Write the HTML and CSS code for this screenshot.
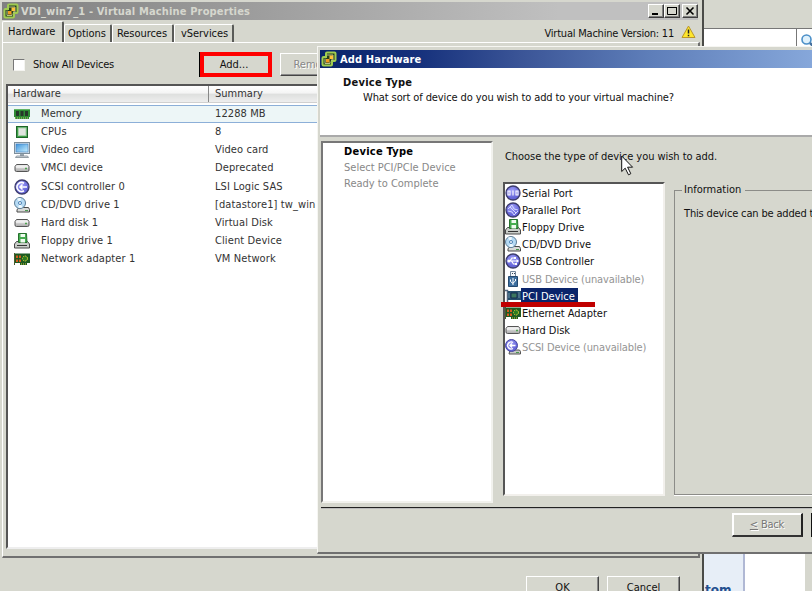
FILE: index.html
```html
<!DOCTYPE html>
<html lang="en">
<head>
    <meta charset="UTF-8">
    <title>VDI_win7_1 - Virtual Machine Properties</title>
    <link rel="stylesheet" href="styles.css">
</head>
<body>
    <!-- Shared icons -->
    <svg class="defs">
        <defs>
            <radialGradient id="ball" cx="45%" cy="35%">
                <stop offset="0" stop-color="#a4a4fa"/>
                <stop offset="1" stop-color="#6464d8"/>
            </radialGradient>
            <linearGradient id="metal" x1="0" y1="0" x2="0" y2="1">
                <stop offset="0" stop-color="#f4f4f4"/>
                <stop offset="1" stop-color="#aaa"/>
            </linearGradient>
            <linearGradient id="screen" x1="0" y1="0" x2="1" y2="1">
                <stop offset="0" stop-color="#3f94dc"/>
                <stop offset="1" stop-color="#c8f0ff"/>
            </linearGradient>
            <symbol id="vm" viewBox="0 0 16 16">
                <path d="M6 1.5h7.5q1 0 1 1V9q0 1-1 1H11v3.500q0 1-1 1H2.500q-1 0-1-1V7q0-1 1-1H5V2.500q0-1 1-1z" fill="#25401a" stroke="#a0cc50" stroke-width="2"/>
                <path d="M6 4h6v5h-2M4 7.500v5h5v-2" fill="none" stroke="#b9bf8c"/>
                <path d="M8.500 4.500h3.500V8H8.500z" fill="#ffc23a"/>
                <path d="M5 8h3.500v3.500H5z" fill="#f09a20"/>
            </symbol>
            <symbol id="memory" viewBox="0 0 16 16">
                <path d="M0 3h16v8h-1v2H1v-2H0z" fill="#2e8b35"/>
                <path d="M0 3h16v1H0z" fill="#62b464"/>
                <path d="M2 5h3v5H2zM6.500 5h3v5h-3zM11 5h3v5h-3z" fill="#26382a"/>
                <path d="M1 12h14" stroke="#c4c36a" stroke-dasharray="1 1"/>
            </symbol>
            <symbol id="cpu" viewBox="0 0 16 16">
                <rect x="2.500" y="2.500" width="11" height="11" fill="#3da047" stroke="#1d6529"/>
                <rect x="4.500" y="4" width="7.500" height="7.500" fill="#e0e5e0" stroke="#a9cfab"/>
            </symbol>
            <symbol id="video" viewBox="0 0 16 16">
                <rect x=".5" y=".5" width="15" height="11" fill="#dce6ec" stroke="#7d8e9b"/>
                <rect x="2" y="2" width="12" height="8" fill="url(#screen)" stroke="#3c7cc0" stroke-width=".6"/>
                <path d="M6 12h4v2H6z" fill="#9aa7b0"/>
                <path d="M2.500 14h11l1 1.500h-13z" fill="#dfe3e6" stroke="#6d7a84" stroke-width=".7"/>
            </symbol>
            <symbol id="disk" viewBox="0 0 16 16">
                <path d="M2.500 4.500h11l1.500 2v3.500q0 1.500-1.500 1.500h-11Q1 11.500 1 10V6.500z" fill="url(#metal)" stroke="#555"/>
                <path d="M2 7h12" stroke="#fff"/>
                <path d="M11 8.500h2" stroke="#4fa352" stroke-width="1.500"/>
            </symbol>
            <symbol id="scsi" viewBox="0 0 16 16">
                <circle cx="8" cy="8" r="7" fill="url(#ball)" stroke="#3c3c6c" stroke-width="1.300"/>
                <path d="M10 4.200A4.500 4.500 0 1 0 10 11.800M5.500 8H13M8.500 5.500L6 8l2.500 2.500" fill="none" stroke="#fff" stroke-width="1.600"/>
            </symbol>
            <symbol id="cd" viewBox="0 0 16 16">
                <path d="M5.500 10.500h9l1 2v2.500H3v-2.500z" fill="#d8dad8" stroke="#4a4a4a"/>
                <circle cx="6" cy="6" r="5.500" fill="#b5daf4" stroke="#5c7c95"/>
                <path d="M6 6L3 1.800A5 5 0 0 1 7 1.200zM6 6l2.500 4.300A5 5 0 0 1 4 10.600z" fill="#eefaff"/>
                <circle cx="6" cy="6" r="1.500" fill="#fff" stroke="#4c82b4"/>
                <path d="M11 13.500h3" stroke="#4b9a50"/>
            </symbol>
            <symbol id="floppy" viewBox="0 0 16 16">
                <path d="M.5 11l2-2.500h11l2 2.500v4H.5z" fill="#c9cdc9" stroke="#4a4a4a"/>
                <path d="M4.500 .5h8l.5 9H4.500z" fill="#46ad50" stroke="#26702d"/>
                <path d="M6.500 1h4.500v3H6.500zM6.500 6h4.500v3.500H6.500z" fill="#f0fbf0"/>
                <path d="M3 12.500h10" stroke="#333"/>
            </symbol>
            <symbol id="nic" viewBox="0 0 16 16">
                <path d="M1 2.500h15v9.500H13v2H6v-2H1z" fill="#1d5b22"/>
                <path d="M0 2h1v12H0z" fill="#4b5a2c"/>
                <path d="M2 4.500h2v2.500H2zM5 4.500h2v2.500H5zM2 8.500h2v2.500H2zM5 8.500h2v2.500H5z" fill="#d65b20"/>
                <circle cx="11" cy="7.500" r="2.500" fill="#2b7c20" stroke="#d8cb35" stroke-dasharray="1.500 .8"/>
                <path d="M7 13h6" stroke="#e4d645" stroke-dasharray="1 1"/>
            </symbol>
            <symbol id="serial" viewBox="0 0 16 16">
                <circle cx="8" cy="8" r="7" fill="url(#ball)" stroke="#3c3c6c" stroke-width="1.300"/>
                <path d="M3 6h2v4H3zM8 5.500v5M11 6h2v4h-2z" fill="none" stroke="#fff" stroke-width="1.100"/>
            </symbol>
            <symbol id="parallel" viewBox="0 0 16 16">
                <circle cx="8" cy="8" r="7" fill="url(#ball)" stroke="#3c3c6c" stroke-width="1.300"/>
                <path d="M3 7l4-4 2 4 4 1M3 9l4 1 2 3 4-4M5 5l6 6" fill="none" stroke="#d4d8ff" stroke-width="1"/>
            </symbol>
            <symbol id="usb" viewBox="0 0 16 16">
                <circle cx="8" cy="8" r="7" fill="url(#ball)" stroke="#3c3c6c" stroke-width="1.300"/>
                <path d="M3 8h9M5 8l2-3h2M6.500 8l2 3h2" fill="none" stroke="#fff" stroke-width="1.200"/>
                <path d="M11.500 6l2.500 2-2.500 2zM9 4h2v2H9zM10 10h2v2h-2z" fill="#fff"/>
                <circle cx="3.800" cy="8" r="1.500" fill="#fff"/>
            </symbol>
            <symbol id="stick" viewBox="0 0 16 16">
                <path d="M5.500 .5h5v5h-5z" fill="#f3f6fa" stroke="#75889c"/>
                <path d="M7 2h1v1H7zM9 2h1v1H9z" fill="#345"/>
                <path d="M3.500 5.500h9v10h-9z" fill="#3d6f9f" stroke="#24496f"/>
                <path d="M8 7v7M5.500 8.500v2L8 12.500M10.500 8v2L8 12" fill="none" stroke="#fff"/>
            </symbol>
            <symbol id="pci" viewBox="0 0 16 16">
                <path d="M0 2.500h2.500V14" fill="none" stroke="#52657c" stroke-width="1.500"/>
                <path d="M3 3h13v9H3z" fill="#254e6c"/>
                <path d="M6 5h6v5H6z" fill="#3b775f" stroke="#152d50"/>
                <path d="M13 5h2M13 7h2M13 9h2M4 5v5" stroke="#6c91a4"/>
            </symbol>
            <symbol id="scsidev" viewBox="0 0 16 16">
                <path d="M5 11h9.500l1 1.500V15H4z" fill="#c6c8c6" stroke="#555"/>
                <circle cx="6.500" cy="6.500" r="6" fill="url(#ball)" stroke="#4747a0"/>
                <path d="M8 3.500A3.500 3.500 0 1 0 8 9.500M5 6.500h5.500M7 4.500l-2 2 2 2" fill="none" stroke="#fff" stroke-width="1.400"/>
                <path d="M11 13.500h3" stroke="#4b9a50"/>
            </symbol>
        </defs>
    </svg>

    <!-- Page behind the windows -->
    <div class="behind-top">
        <div class="field"></div>
        <div class="search">
            <svg width="11" height="14" viewBox="0 0 11 14"><circle cx="5.500" cy="5.500" r="4.500" fill="#dff1fc" stroke="#4b8fc8" stroke-width="1.600"/><path d="M9 9l4 4" stroke="#446f9d" stroke-width="2.500"/></svg>
        </div>
    </div>
    <div class="behind-bottom">
        <div class="nav-cell">tom</div>
        <div class="nav-space"></div>
    </div>

    <!-- Virtual Machine Properties -->
    <div class="window props">
        <div class="title-bar inactive">
            <svg class="icon"><use href="#vm"/></svg>
            <span class="title">VDI_win7_1 - Virtual Machine Properties</span>
            <div class="caption">
                <b><svg width="10" height="10"><path d="M1 8h6" stroke="#000" stroke-width="2"/></svg></b>
                <b><svg width="10" height="10"><path d="M.5 1.500h9v7h-9zM0 1.500h10" fill="none" stroke="#000"/></svg></b>
                <b class="close"><svg width="10" height="10"><path d="M1.500 1.500l7 7M8.500 1.500l-7 7" stroke="#000" stroke-width="1.600"/></svg></b>
            </div>
        </div>

        <div class="tabs">
            <span class="tab active">Hardware</span>
            <span class="tab options">Options</span>
            <span class="tab resources">Resources</span>
            <span class="tab services">vServices</span>
            <span class="version">Virtual Machine Version: 11</span>
            <svg class="warn" width="15" height="14" viewBox="0 0 15 14"><path d="M7.500 1L14 12.500H1z" fill="#ffe72c" stroke="#b9972a" stroke-linejoin="round"/><path d="M7.500 4.500v4M7.500 9.800v1.500" stroke="#222" stroke-width="1.500"/></svg>
        </div>

        <div class="panel">
            <div class="toolbar">
                <i class="checkbox"></i>
                <span class="show-all">Show All Devices</span>
                <span class="btn add">Add...</span>
                <span class="btn remove">Remove</span>
            </div>
            <div class="hw-list">
                <div class="hw-head"><span>Hardware</span><span class="col2">Summary</span></div>
                <div class="hw-row selected"><svg class="icon"><use href="#memory"/></svg><span>Memory</span><span>12288 MB</span></div>
                <div class="hw-row"><svg class="icon"><use href="#cpu"/></svg><span>CPUs</span><span>8</span></div>
                <div class="hw-row"><svg class="icon"><use href="#video"/></svg><span>Video card</span><span>Video card</span></div>
                <div class="hw-row"><svg class="icon"><use href="#disk"/></svg><span>VMCI device</span><span>Deprecated</span></div>
                <div class="hw-row"><svg class="icon"><use href="#scsi"/></svg><span>SCSI controller 0</span><span>LSI Logic SAS</span></div>
                <div class="hw-row"><svg class="icon"><use href="#cd"/></svg><span>CD/DVD drive 1</span><span>[datastore1] tw_win</span></div>
                <div class="hw-row"><svg class="icon"><use href="#disk"/></svg><span>Hard disk 1</span><span>Virtual Disk</span></div>
                <div class="hw-row"><svg class="icon"><use href="#floppy"/></svg><span>Floppy drive 1</span><span>Client Device</span></div>
                <div class="hw-row"><svg class="icon"><use href="#nic"/></svg><span>Network adapter 1</span><span>VM Network</span></div>
            </div>
        </div>
        <div class="footer">
            <span class="btn">OK</span>
            <span class="btn">Cancel</span>
        </div>
    </div>

    <!-- Add Hardware wizard -->
    <div class="window wizard">
        <div class="title-bar">
            <svg class="icon"><use href="#vm"/></svg>
            <span class="title">Add Hardware</span>
        </div>
        <div class="wizard-head">
            <h1>Device Type</h1>
            <p>What sort of device do you wish to add to your virtual machine?</p>
        </div>
        <div class="wizard-body">
            <div class="steps">
                <b>Device Type</b>
                <span>Select PCI/PCIe Device</span>
                <span>Ready to Complete</span>
            </div>
            <div class="content">
                <p class="prompt">Choose the type of device you wish to add.</p>
                <div class="choice">
                    <ul class="devices">
                        <li><svg class="icon"><use href="#serial"/></svg><span>Serial Port</span></li>
                        <li><svg class="icon"><use href="#parallel"/></svg><span>Parallel Port</span></li>
                        <li><svg class="icon"><use href="#floppy"/></svg><span>Floppy Drive</span></li>
                        <li><svg class="icon"><use href="#cd"/></svg><span>CD/DVD Drive</span></li>
                        <li><svg class="icon"><use href="#usb"/></svg><span>USB Controller</span></li>
                        <li class="off"><svg class="icon"><use href="#stick"/></svg><span>USB Device (unavailable)</span></li>
                        <li class="current"><svg class="icon"><use href="#pci"/></svg><span>PCI Device</span></li>
                        <li><svg class="icon"><use href="#nic"/></svg><span>Ethernet Adapter</span></li>
                        <li><svg class="icon"><use href="#disk"/></svg><span>Hard Disk</span></li>
                        <li class="off"><svg class="icon"><use href="#scsidev"/></svg><span>SCSI Device (unavailable)</span></li>
                    </ul>
                    <fieldset>
                        <legend>Information</legend>
                        <p>This device can be added t</p>
                    </fieldset>
                </div>
            </div>
        </div>
        <div class="wizard-footer">
            <span class="btn back"><u>&lt;</u> Back</span>
            <span class="next"></span>
        </div>
    </div>

    <!-- Overlays -->
    <div class="underline"></div>
    <svg class="cursor" width="13" height="21" viewBox="0 0 13 21"><path d="M.7 1v15.500l3.500-3.300 3.300 6.600 2.300-1.100-3.200-6.500h5z" fill="#fff" stroke="#111"/></svg>
</body>
</html>
```
FILE: styles.css
```css
* {
    box-sizing: border-box;
}

body {
    margin: 0;
    width: 812px;
    height: 591px;
    position: relative;
    overflow: hidden;
    background: #d6d7ce;
    color: #111;
    font-family: "DejaVu Sans Condensed", "DejaVu Sans", sans-serif;
    font-stretch: condensed;
    font-size: 11px;
    line-height: 14px;
    white-space: nowrap;
}

p, h1, ul {
    margin: 0;
    padding: 0;
}

.defs {
    position: absolute;
    width: 0;
    height: 0;
}

.icon {
    width: 16px;
    height: 16px;
    flex: none;
}

/* Page behind */
.behind-top {
    position: absolute;
    left: 704px;
    top: 28px;
    width: 108px;
    height: 20px;
    display: flex;
    background: #fff;
    border-top: 1px solid #777;
}

.field {
    width: 93px;
    border-right: 1px solid #777;
}

.search {
    padding: 5px 0 0 4px;
}

.behind-bottom {
    position: absolute;
    left: 704px;
    top: 553px;
    width: 108px;
    height: 38px;
    display: flex;
}

.nav-cell {
    width: 41px;
    padding: 28px 0 0 1px;
    background: #e7eef7;
    border-right: 2px solid #b0b8d4;
    color: #24508f;
    font: bold 12px/18px "DejaVu Sans", sans-serif;
}

.nav-space {
    width: 60px;
    background: #fff;
}

/* Windows */
.window {
    position: absolute;
    display: flex;
    flex-direction: column;
    background: #d6d7ce;
}

.title-bar {
    display: flex;
    align-items: center;
    flex: none;
    height: 18px;
    background: linear-gradient(to right, #0a246a, #16317c 20%, #3b5597 41%, #5e7eb9 67%, #86a7da);
    color: #fff;
}

.title-bar.inactive {
    background: linear-gradient(to right, #808080, #c0c0c0 80%);
    color: #d6d7ce;
}

.title {
    margin-left: 3px;
    padding-top: 1px;
    font-weight: bold;
    letter-spacing: 0.15px;
}

.inactive .title {
    margin-left: 2px;
}

.caption {
    display: flex;
    margin-left: auto;
}

.caption b {
    width: 16px;
    height: 14px;
    display: flex;
    align-items: center;
    justify-content: center;
    background: #d6d7ce;
    border: 1px solid;
    border-color: #fff #404040 #404040 #fff;
    box-shadow: inset -1px -1px #808080;
}

.caption .close {
    margin-left: 2px;
}

.btn {
    flex: none;
    display: flex;
    justify-content: center;
    align-items: center;
    height: 23px;
    border: 1px solid;
    border-color: #fff #444 #444 #fff;
    box-shadow: inset -1px -1px #888;
}

/* Properties window */
.props {
    left: 0;
    top: 0;
    width: 704px;
    height: 591px;
    padding: 2px 2px 0 2px;
    border-right: 2px solid #4a4b48;
}

.props .title-bar {
    margin-right: 2px;
    padding-left: 1px;
}

.tabs {
    display: flex;
    height: 22px;
    flex: none;
    align-items: flex-end;
    letter-spacing: -0.05px;
}

.tab {
    height: 18px;
    padding: 2px 0 0 3px;
    border: solid #fff;
    border-width: 1px 0 0 1px;
    border-right: 2px solid #5a5b58;
    border-radius: 2px 2px 0 0;
}

.tab.active {
    width: 62px;
    height: 21px;
    padding: 3px 0 0 5px;
}

.options {
    width: 48px;
}

.resources {
    width: 62px;
    padding-left: 4px;
}

.services {
    width: 60px;
    padding-left: 6px;
}

.version {
    margin: 0 7px 1px auto;
    letter-spacing: -0.22px;
}

.warn {
    margin: 0 4px 3px 0;
}

.panel {
    flex: none;
    height: 516px;
    padding: 8px 0 0 3px;
    border: solid;
    border-width: 1px 2px 2px 1px;
    border-color: #fff #707070 #707070 #fff;
}

.toolbar {
    display: flex;
    align-items: center;
    height: 27px;
    padding-left: 7px;
}

.checkbox {
    width: 12px;
    height: 12px;
    background: #fff;
    border: 1px solid;
    border-color: #777 #f4f4f0 #f4f4f0 #777;
}

.show-all {
    width: 175px;
    padding-left: 8px;
    letter-spacing: -0.2px;
}

.btn.add {
    width: 72px;
    height: 25px;
    border: 4px solid #f00;
    box-shadow: -1px 0 #000;
    padding-right: 4px;
}

.btn.remove {
    width: 72px;
    margin-left: 8px;
    padding-right: 5px;
    color: #888;
    text-shadow: 1px 1px #fff;
}

.hw-list {
    width: 690px;
    height: 465px;
    margin-top: 6px;
    background: #fff;
    border: 2px solid;
    border-color: #555 #eee #eee #555;
    color: #333;
    letter-spacing: 0.1px;
}

.hw-head {
    display: grid;
    grid-template-columns: 201px 1fr;
    height: 17px;
    padding-left: 5px;
    margin-bottom: 2px;
    line-height: 16px;
    background: linear-gradient(#fff, #f4f4f4 45%, #dedfde 50%, #eee);
    border-bottom: 1px solid #d0d0d0;
    letter-spacing: 0;
}

.hw-head .col2 {
    margin-left: -6px;
    padding-left: 6px;
    border-left: 1px solid #888;
}

.hw-row {
    display: grid;
    grid-template-columns: 27px 174px 1fr;
    align-items: center;
    height: 18.15px;
    padding-left: 6px;
    border: 1px solid transparent;
    border-left: 0;
}

.hw-row.selected {
    background: #edf6f7;
    border-color: #8cafd8;
}

.footer {
    display: flex;
    justify-content: flex-end;
    gap: 8px;
    padding: 18px 20px 0 0;
}

.footer .btn {
    width: 73px;
}

/* Wizard */
.wizard {
    left: 317px;
    top: 46px;
    width: 495px;
    height: 508px;
    padding: 4px 0 0 2px;
    border: solid;
    border-width: 1px 0 2px 1px;
    border-color: #f6f6f2 transparent #707070 #f6f6f2;
}

.wizard .title-bar {
    margin-top: -1px;
    padding-left: 1px;
}

.wizard-head {
    height: 69px;
    flex: none;
    padding: 7px 0 0 23px;
    background: #fff;
    border-bottom: 2px solid #aaa;
}

.wizard-head h1 {
    font-size: 11px;
    line-height: 16px;
    letter-spacing: 0.25px;
}

.wizard-head p {
    padding-left: 20px;
    letter-spacing: -0.11px;
}

.wizard-body {
    display: flex;
    flex: none;
    height: 370px;
    padding: 4px 0 0 1px;
}

.steps {
    width: 172px;
    height: 362px;
    padding: 1px 0 0 21px;
    background: #fff;
    border: 2px solid;
    border-color: #777 #f2f2ee #f2f2ee #777;
    color: #888;
    display: flex;
    flex-direction: column;
    line-height: 16px;
}

.steps b {
    color: #000;
    letter-spacing: 0.25px;
}

.content {
    flex: 1;
    min-width: 0;
    padding: 9px 0 0 10px;
}

.prompt {
    padding-left: 2px;
    letter-spacing: -0.05px;
}

.choice {
    display: flex;
    margin-top: 18px;
}

.devices {
    width: 162px;
    height: 314px;
    flex: none;
    list-style: none;
    background: #fff;
    border: 2px solid;
    border-color: #555 #f2f0ec #f2f0ec #555;
}

.devices li {
    display: flex;
    align-items: center;
    height: 17.2px;
}

.devices span {
    padding: 2px 1px 0;
}

.devices .off {
    color: #949494;
    letter-spacing: -0.13px;
}

.devices .current span {
    height: 16px;
    padding-right: 3px;
    background: #0a246a;
    color: #fff;
}

fieldset {
    flex: 1;
    min-width: 0;
    height: 312px;
    margin: 1px 0 0 9px;
    padding: 10px 0 0 9px;
    border: 1px solid #8c8c88;
    border-right: 0;
    box-shadow: 0 1px #fff;
}

fieldset p {
    letter-spacing: -0.16px;
}

legend {
    margin-left: -2px;
    padding: 0 4px 0 2px;
}

.wizard-footer {
    display: flex;
    gap: 8px;
    margin-left: 1px;
    padding: 5px 0 0 411px;
    border-top: 1px solid #222;
    box-shadow: inset 0 1px #bbb;
}

.btn.back {
    width: 71px;
    height: 24px;
    color: #777;
    border-width: 1px 2px 2px 1px;
    border-color: #fff #222 #333 #fff;
    box-shadow: inset 1px 1px #fff;
    text-shadow: 1px 1px #fff;
    letter-spacing: -0.2px;
}

.back u {
    margin-right: 3px;
}

.next {
    width: 1px;
    height: 24px;
    background: #111;
}

/* Overlays */
.underline {
    position: absolute;
    left: 501px;
    top: 302px;
    width: 94px;
    height: 5px;
    background: #c00000;
}

.cursor {
    position: absolute;
    left: 621px;
    top: 155px;
}
```
